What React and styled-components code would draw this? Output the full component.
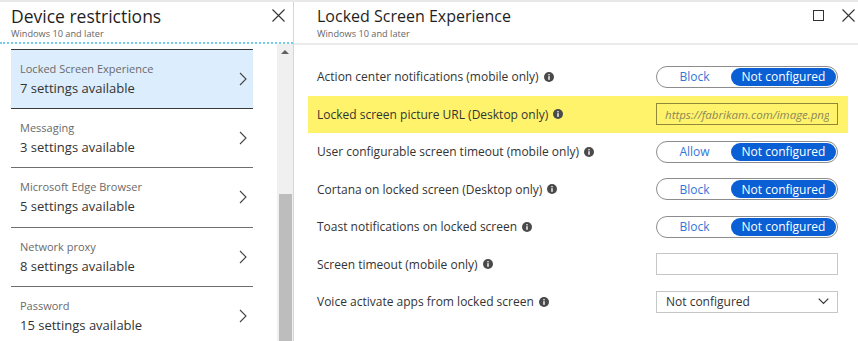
import React from "react";
import styled, { createGlobalStyle } from "styled-components";

const Global = createGlobalStyle`
  html, body { margin: 0; padding: 0; background: #fff; }
  body { font-family: "Open Sans", "Noto Sans", sans-serif; color: #323130; }
  * { box-sizing: border-box; }
`;

const Page = styled.div`
  display: flex;
  width: 858px;
  height: 341px;
  overflow: hidden;
  border-top: 2px solid #e8e8e8;
`;

const LeftBlade = styled.section`
  width: 294px;
  display: flex;
  flex-direction: column;
  border-right: 1px solid #d6d6d6;
`;

const RightBlade = styled.section`
  flex: 1;
  display: flex;
  flex-direction: column;
`;

const Header = styled.header`
  height: ${(p) => p.$h}px;
  display: flex;
  align-items: flex-start;
  padding: 0 ${(p) => p.$pr}px 0 ${(p) => p.$pl}px;
  border-bottom: ${(p) => p.$border};
`;

const Titles = styled.div`
  flex: 1;
  display: flex;
  flex-direction: column;
`;

const Title = styled.h1`
  margin: 0;
  font-weight: 400;
  font-size: ${(p) => p.$size}px;
  line-height: ${(p) => p.$lh}px;
  color: #1f1f1f;
  margin-top: ${(p) => p.$mt}px;
`;

const Sub = styled.div`
  font-size: 9.2px;
  line-height: 11px;
  color: #666;
  margin-top: ${(p) => p.$mt}px;
`;

const HeaderIcons = styled.div`
  display: flex;
  gap: 18px;
  align-items: center;
  margin-top: ${(p) => p.$mt}px;
`;

const IconBtn = styled.span`
  display: flex;
  width: ${(p) => p.$w}px;
  height: ${(p) => p.$w}px;
`;

const LeftBody = styled.div`
  flex: 1;
  display: flex;
  min-height: 0;
`;

const List = styled.div`
  flex: 1;
  padding: 5px 24px 0 11px;
  display: flex;
  flex-direction: column;
`;

const Item = styled.div`
  height: 59.5px;
  flex-shrink: 0;
  display: flex;
  align-items: center;
  padding: 0 6px 0 9px;
  background: ${(p) => (p.$selected ? "#dcedfd" : "transparent")};
  border-top: ${(p) => (p.$first ? "1px solid #3a3a3a" : "none")};
  border-bottom: 1px solid ${(p) => (p.$selected ? "#3a3a3a" : "#6e6e6e")};
`;

const ItemText = styled.div`
  flex: 1;
  display: flex;
  flex-direction: column;
  gap: 3px;
`;

const ItemTitle = styled.div`
  font-size: 11px;
  line-height: 15px;
  color: #6a6a6a;
`;

const ItemSub = styled.div`
  font-size: 13px;
  line-height: 18px;
  color: #333;
`;

const Scrollbar = styled.div`
  width: 16px;
  background: #f0f0f0;
  display: flex;
  flex-direction: column;
  align-items: center;
`;

const ArrowUp = styled.div`
  margin-top: 6px;
  width: 0;
  height: 0;
  border-left: 4px solid transparent;
  border-right: 4px solid transparent;
  border-bottom: 4px solid #606060;
`;

const ThumbSpacer = styled.div`
  height: 140px;
`;

const Thumb = styled.div`
  flex: 1;
  width: 13px;
  background: #bdbdbd;
`;

const RightBodyWrap = styled.div`
  padding: 13px 10px 0 14px;
  display: flex;
  flex-direction: column;
`;

const Row = styled.div`
  height: 37.5px;
  display: flex;
  align-items: center;
  padding: 0 10px 0 9px;
  background: ${(p) => (p.$highlight ? "#fff36b" : "transparent")};
`;

const Label = styled.div`
  flex: 1;
  font-size: 12px;
  color: #333;
  display: flex;
  align-items: center;
  gap: 5px;
`;

const Toggle = styled.div`
  width: 182px;
  height: 22px;
  border: 1px solid #8c8c8c;
  border-radius: 11px;
  display: flex;
  padding: 1px;
`;

const Seg = styled.div`
  flex: ${(p) => (p.$on ? "0 0 105px" : "1")};
  border-radius: 10px;
  display: flex;
  align-items: center;
  justify-content: center;
  font-size: 12px;
  background: ${(p) => (p.$on ? "#0a5fd4" : "transparent")};
  color: ${(p) => (p.$on ? "#fff" : "#3476d6")};
`;

const TextBox = styled.input`
  width: 182px;
  height: 22px;
  border: 1px solid ${(p) => (p.$dark ? "#8e8838" : "#c6c6c6")};
  background: ${(p) => (p.$dark ? "transparent" : "#fff")};
  font-family: inherit;
  font-size: 11.5px;
  padding: 0 8px;
  outline: none;
  &::placeholder {
    color: #8a865a;
    font-style: italic;
  }
`;

const Select = styled.div`
  width: 182px;
  height: 22px;
  border: 1px solid #c6c6c6;
  display: flex;
  align-items: center;
  justify-content: space-between;
  padding: 0 8px 0 9px;
  font-size: 12px;
  color: #333;
`;

const Info = () => (
  <svg width="10" height="10" viewBox="0 0 10 10">
    <circle cx="5" cy="5" r="5" fill="#4a4a4a" />
    <rect x="4.3" y="4.2" width="1.4" height="3.6" fill="#fff" />
    <circle cx="5" cy="2.8" r="0.8" fill="#fff" />
  </svg>
);

const Close = ({ size = 13 }) => (
  <svg width={size} height={size} viewBox="0 0 13 13">
    <path d="M0.5 0.5 L12.5 12.5 M12.5 0.5 L0.5 12.5" stroke="#333" strokeWidth="1.1" />
  </svg>
);

const Maximize = () => (
  <svg width="11" height="11" viewBox="0 0 11 11">
    <rect x="0.5" y="0.5" width="10" height="10" fill="none" stroke="#333" strokeWidth="1" />
  </svg>
);

const Chevron = () => (
  <svg width="8" height="14" viewBox="0 0 8 14">
    <path d="M1 1 L7 7 L1 13" fill="none" stroke="#444" strokeWidth="1.1" />
  </svg>
);

const ChevronDown = () => (
  <svg width="11" height="7" viewBox="0 0 11 7">
    <path d="M0.7 0.7 L5.5 5.5 L10.3 0.7" fill="none" stroke="#333" strokeWidth="1.2" />
  </svg>
);

const items = [
  { t: "Locked Screen Experience", s: "7 settings available", sel: true },
  { t: "Messaging", s: "3 settings available" },
  { t: "Microsoft Edge Browser", s: "5 settings available" },
  { t: "Network proxy", s: "8 settings available" },
  { t: "Password", s: "15 settings available" },
];

const ToggleCtl = ({ left }) => (
  <Toggle>
    <Seg>{left}</Seg>
    <Seg $on>Not configured</Seg>
  </Toggle>
);

export default function App() {
  return (
    <>
      <Global />
      <Page>
        <LeftBlade>
          <Header $h={42} $pl={11} $pr={8} $border="2px dotted #72cdea">
            <Titles>
              <Title $size={17.5} $lh={20} $mt={4}>Device restrictions</Title>
              <Sub $mt={2}>Windows 10 and later</Sub>
            </Titles>
            <HeaderIcons $mt={7}>
              <IconBtn $w={13}><Close /></IconBtn>
            </HeaderIcons>
          </Header>
          <LeftBody>
            <List>
              {items.map((it, i) => (
                <Item key={it.t} $selected={it.sel} $first={i === 0}>
                  <ItemText>
                    <ItemTitle>{it.t}</ItemTitle>
                    <ItemSub>{it.s}</ItemSub>
                  </ItemText>
                  <Chevron />
                </Item>
              ))}
            </List>
            <Scrollbar>
              <ArrowUp />
              <ThumbSpacer />
              <Thumb />
            </Scrollbar>
          </LeftBody>
        </LeftBlade>
        <RightBlade>
          <Header $h={43} $pl={23} $pr={3} $border="2px solid #ebebeb">
            <Titles>
              <Title $size={16} $lh={20} $mt={4}>Locked Screen Experience</Title>
              <Sub $mt={2}>Windows 10 and later</Sub>
            </Titles>
            <HeaderIcons $mt={7}>
              <IconBtn $w={11}><Maximize /></IconBtn>
              <IconBtn $w={13}><Close /></IconBtn>
            </HeaderIcons>
          </Header>
          <RightBodyWrap>
            <Row>
              <Label>Action center notifications (mobile only) <Info /></Label>
              <ToggleCtl left="Block" />
            </Row>
            <Row $highlight>
              <Label>Locked screen picture URL (Desktop only) <Info /></Label>
              <TextBox $dark placeholder="https://fabrikam.com/image.png" />
            </Row>
            <Row>
              <Label>User configurable screen timeout (mobile only) <Info /></Label>
              <ToggleCtl left="Allow" />
            </Row>
            <Row>
              <Label>Cortana on locked screen (Desktop only) <Info /></Label>
              <ToggleCtl left="Block" />
            </Row>
            <Row>
              <Label>Toast notifications on locked screen <Info /></Label>
              <ToggleCtl left="Block" />
            </Row>
            <Row>
              <Label>Screen timeout (mobile only) <Info /></Label>
              <TextBox />
            </Row>
            <Row>
              <Label>Voice activate apps from locked screen <Info /></Label>
              <Select>
                Not configured
                <ChevronDown />
              </Select>
            </Row>
          </RightBodyWrap>
        </RightBlade>
      </Page>
    </>
  );
}
